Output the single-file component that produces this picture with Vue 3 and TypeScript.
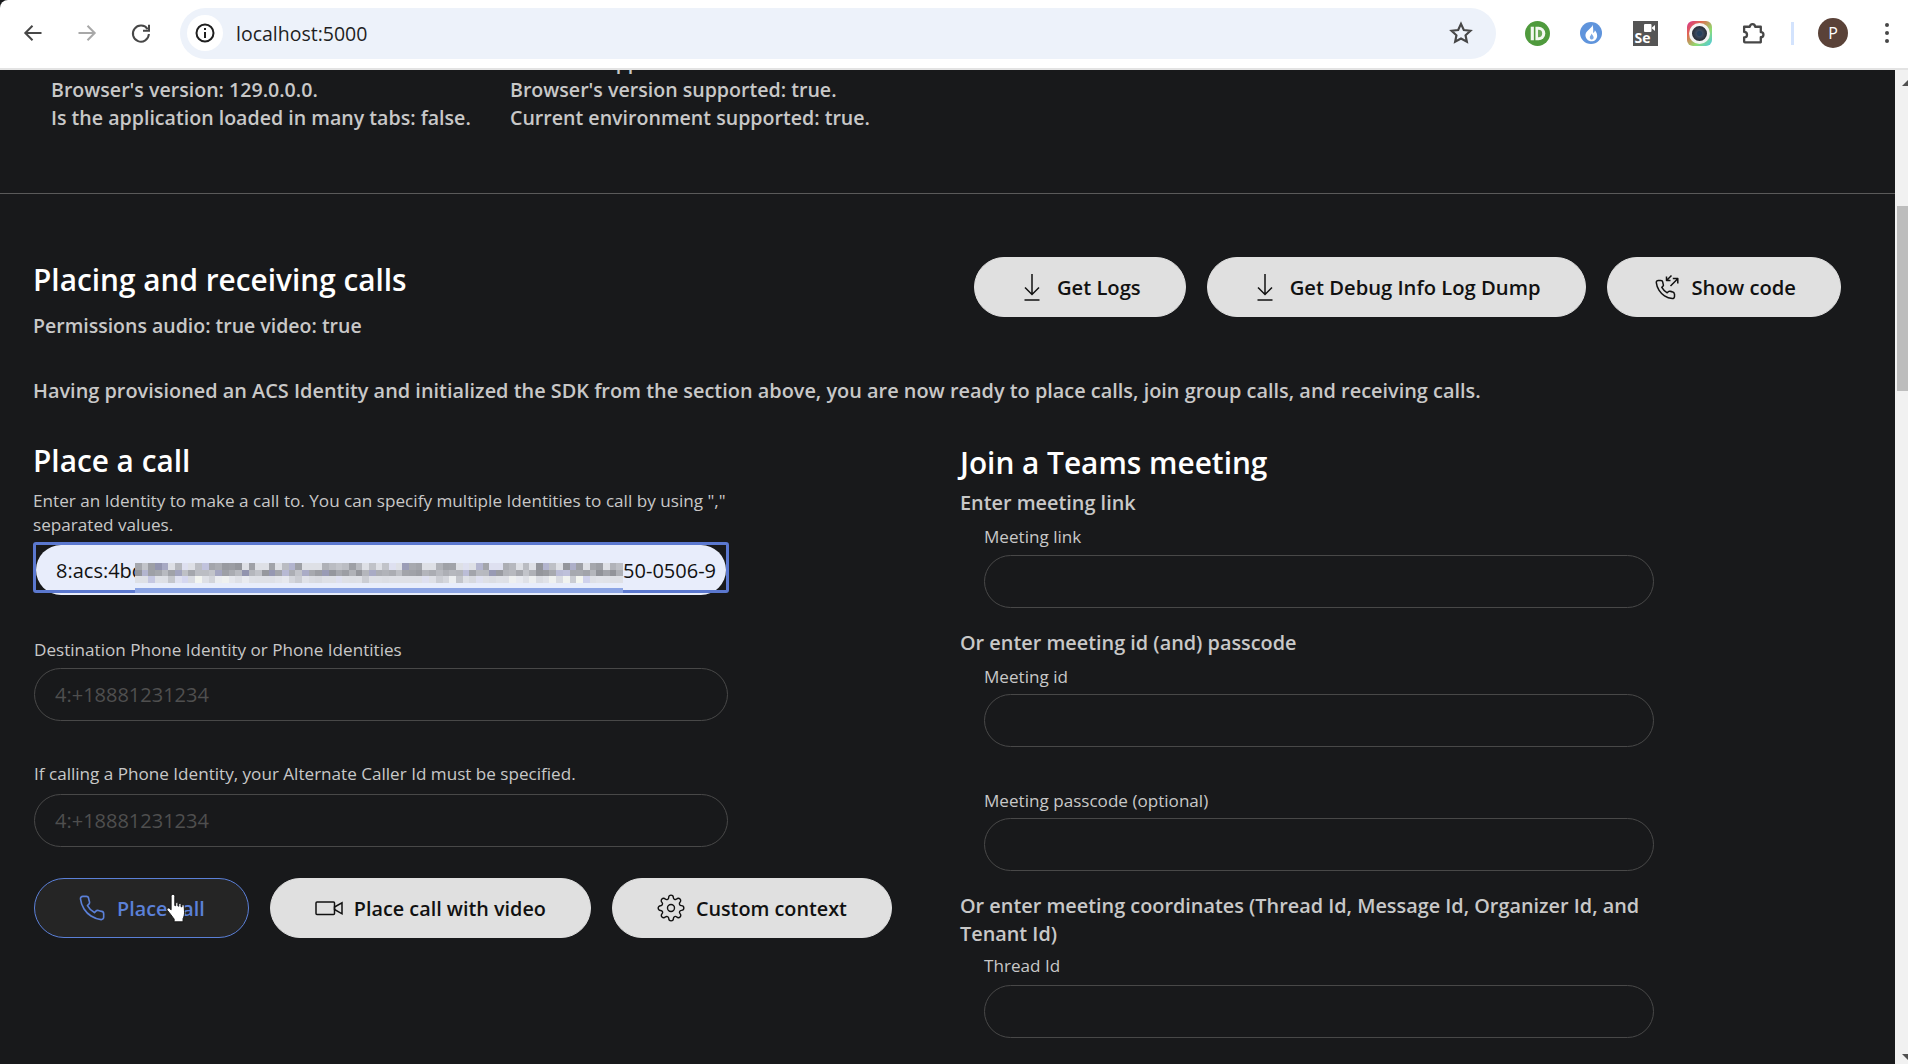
<script setup lang="ts">
// values for the pixelated strip that hides the middle of the identity
const blurCells: string[] = [];
let seed = 17;
for (let i = 0; i < 73 * 3; i++) {
  seed = (seed * 137 + 59) % 1009;
  const row = Math.floor(i / 73);
  const isGap = seed % 3 === 0 && row !== 1;
  const base = row === 2 ? 195 : 145;
  const light = isGap ? 222 : base + (seed % 50);
  const tint = seed % 7 === 0 ? 28 : 8;
  blurCells.push(`rgb(${light}, ${light + 2}, ${Math.min(light + tint, 240)})`);
}

const placeCallFields = [
  { label: 'Destination Phone Identity or Phone Identities', placeholder: '4:+18881231234' },
  { label: 'If calling a Phone Identity, your Alternate Caller Id must be specified.', placeholder: '4:+18881231234' },
];
</script>

<template>
  <div class="browser">
    <header class="toolbar">
      <div class="nav-icon">
        <svg width="24" height="24" viewBox="0 0 24 24" fill="none" stroke="#474747" stroke-width="2"><path d="M20.5 12H4.5M11.5 4.8 4.3 12l7.2 7.2" /></svg>
      </div>
      <div class="nav-icon">
        <svg width="24" height="24" viewBox="0 0 24 24" fill="none" stroke="#a8a8a8" stroke-width="2"><path d="M3.5 12h16M12.5 4.8l7.2 7.2-7.2 7.2" /></svg>
      </div>
      <div class="nav-icon">
        <svg width="24" height="24" viewBox="0 0 24 24" fill="none" stroke="#474747" stroke-width="2"><path d="M18.6 8.2A8 8 0 1 0 19.9 13" /><path d="M20 3.8v6h-6" /></svg>
      </div>
      <div class="address-bar">
        <span class="site-info">
          <svg width="22" height="22" viewBox="0 0 22 22" fill="none" stroke="#1f1f1f" stroke-width="2"><circle cx="11" cy="11" r="8.5" /><path d="M11 10v6M11 6v2" /></svg>
        </span>
        <span class="url">localhost:5000</span>
        <svg class="star" width="26" height="26" viewBox="0 0 24 24" fill="none" stroke="#474747" stroke-width="2"><path d="m12 3.6 2.6 5.6 6.1.7-4.5 4.2 1.2 6L12 17.1l-5.4 3 1.2-6-4.5-4.2 6.1-.7z" /></svg>
      </div>
      <div class="ext-icons">
        <div class="nav-icon">
          <svg width="25" height="25" viewBox="0 0 24 24"><circle cx="12" cy="12" r="12" fill="#4f9a3d" /><rect x="5.500" y="5.500" width="3" height="13" fill="#f4f8f2" /><path d="M10 5.500h3a6.500 6.500 0 0 1 0 13h-3z" fill="#f4f8f2" /><path d="M12.500 8.500h.5a3.500 3.500 0 0 1 0 7h-.5z" fill="#6aa858" /></svg>
        </div>
        <div class="nav-icon">
          <svg width="22" height="22" viewBox="0 0 24 24"><circle cx="12" cy="12" r="12" fill="#5f94dc" /><path d="M13.500 2.500c.8 3.800-6.600 6.200-7.500 11-.6 4 3 7.500 6.500 7.500 3.600 0 6.400-2.800 6.200-6.400-.1-2.400-1.400-4.200-2.500-5.600-.2 1.600-.8 2.400-1.800 3 .4-3.800-.2-7.400-1-9.500z" fill="#fff" /><path d="M12.400 12.500c.4 1.600-2 2.600-1.700 4.600.2 1.300 1.100 2 2.200 2s2-.9 2-2.200c0-1.800-1.500-2.800-2.500-4.400z" fill="#7eaae4" /></svg>
        </div>
        <div class="nav-icon">
          <div class="se-badge">
            <svg class="se-cam" width="11" height="8" viewBox="0 0 11 8"><rect width="7.500" height="8" rx="1" fill="#fff" /><path d="M8 3.500 11 1v6L8 4.500z" fill="#fff" /></svg>
            <span class="se-text">Se</span>
          </div>
        </div>
        <div class="nav-icon">
          <div class="cam-badge"><span class="cam-lens"></span></div>
        </div>
        <div class="nav-icon">
          <svg width="25" height="25" viewBox="0 0 24 24" fill="none" stroke="#474747" stroke-width="2.200" stroke-linejoin="round"><path d="M3 5.500h5.500c0-3.400 5-3.400 5 0H19v5.200c3.400 0 3.400 4.800 0 4.800V20.500H3.800c-.5 0-.8-.3-.8-.8v-4c3.700 0 3.700-5.200 0-5.200z" /></svg>
        </div>
      </div>
      <span class="toolbar-sep"></span>
      <span class="avatar">P</span>
      <div class="menu-dots"><i></i><i></i><i></i></div>
    </header>

    <div class="viewport">
      <main class="page">
        <section class="env-info">
          <div>
            <p>Browser's name: Chrome.</p>
            <p>Browser's version: 129.0.0.0.</p>
            <p>Is the application loaded in many tabs: false.</p>
          </div>
          <div>
            <p>Browser supported: true.</p>
            <p>Browser's version supported: true.</p>
            <p>Current environment supported: true.</p>
          </div>
        </section>

        <section class="calls">
          <div class="calls-head">
            <div>
              <h2 class="section-title">Placing and receiving calls</h2>
              <p class="strong-text permissions">Permissions audio: true video: true</p>
            </div>
            <div class="btn-row head-actions">
              <button class="pill-btn">
                <svg class="btn-icon" width="26" height="30" viewBox="0 0 26 30" fill="none" stroke="#111" stroke-width="1.500"><path d="M13 2v20M6 15.500l7 7 7-7M5.500 28h15" /></svg>
                Get Logs
              </button>
              <button class="pill-btn">
                <svg class="btn-icon" width="26" height="30" viewBox="0 0 26 30" fill="none" stroke="#111" stroke-width="1.500"><path d="M13 2v20M6 15.500l7 7 7-7M5.500 28h15" /></svg>
                Get Debug Info Log Dump
              </button>
              <button class="pill-btn">
                <svg class="btn-icon" width="28" height="28" viewBox="0 0 28 28" fill="none" stroke="#111" stroke-width="1.500" stroke-linejoin="round"><path d="M22.500 21v2.600a2 2 0 0 1-2.200 2 18 18 0 0 1-7.800-2.800 17.500 17.500 0 0 1-5.400-5.400A18 18 0 0 1 4.300 9.600a2 2 0 0 1 2-2.200h2.600a1.800 1.800 0 0 1 1.800 1.500c.1.900.3 1.700.6 2.500a1.800 1.800 0 0 1-.4 1.900l-1.100 1.100a14.400 14.400 0 0 0 5.400 5.400l1.100-1.100a1.800 1.800 0 0 1 1.900-.4c.8.3 1.600.5 2.500.6a1.800 1.800 0 0 1 1.500 1.800z" /><path d="M19.500 2.500l-5 5M14.500 3.500v4h4M18.500 13l7-7M20.800 5.500h5v5" /></svg>
                Show code
              </button>
            </div>
          </div>

          <p class="strong-text intro">Having provisioned an ACS Identity and initialized the SDK from the section above, you are now ready to place calls, join group calls, and receiving calls.</p>

          <div class="columns">
            <div class="col-place">
              <h2 class="section-title">Place a call</h2>
              <p class="hint">Enter an Identity to make a call to. You can specify multiple Identities to call by using "," separated values.</p>
              <div class="identity-input">
                <div class="identity-pill">
                  <span>8:acs:4bc</span>
                  <span>50-0506-9</span>
                </div>
                <span class="blur-strip">
                  <i v-for="(color, idx) in blurCells" :key="idx" :style="{ background: color }"></i>
                </span>
                <span class="focus-ring"></span>
                <span class="focus-strip"></span>
              </div>

              <div v-for="field in placeCallFields" :key="field.label" class="place-field">
                <label class="field-label">{{ field.label }}</label>
                <input class="pill-input" :placeholder="field.placeholder" />
              </div>

              <div class="btn-row call-actions">
                <button class="pill-btn is-hovered">
                  <svg class="btn-icon" width="28" height="28" viewBox="0 0 24 24" fill="none" stroke="#5b80d8" stroke-width="1.400" stroke-linejoin="round"><path d="M22 16.920v3a2 2 0 0 1-2.180 2 19.790 19.790 0 0 1-8.630-3.070 19.500 19.500 0 0 1-6-6 19.790 19.790 0 0 1-3.070-8.670A2 2 0 0 1 4.110 2h3a2 2 0 0 1 2 1.720 12.840 12.840 0 0 0 .7 2.810 2 2 0 0 1-.45 2.110L8.090 9.910a16 16 0 0 0 6 6l1.270-1.270a2 2 0 0 1 2.110-.45 12.840 12.840 0 0 0 2.810.7A2 2 0 0 1 22 16.920z" /></svg>
                  Place call
                  <svg class="hand-cursor" width="26" height="33" viewBox="0 0 28 36"><path d="M8.500 1.500c1.200 0 2 .9 2 2.200v10l1 .2v-2.400c0-1.400 2.200-1.400 2.400 0v2.700l1 .2v-2c0-1.400 2.200-1.400 2.400 0v2.500l1 .2v-1.400c0-1.300 2.200-1.300 2.400.2l.4 6.600c.1 3.400-.6 5.400-1.600 7.400v3.500H9.800v-3c-2-2.400-4.600-6.400-7.300-9.400-1.400-1.600.2-3.600 2-2.400l2 1.800V3.700c0-1.300.8-2.200 2-2.200z" fill="#fff" stroke="#111" stroke-width="1" /></svg>
                </button>
                <button class="pill-btn">
                  <svg class="btn-icon" width="28" height="28" viewBox="0 0 28 28" fill="none" stroke="#111" stroke-width="1.500"><rect x="1" y="8" width="18.500" height="12.500" rx="1" /><path d="M19.500 13 27 8.800v11L19.500 15.500z" /></svg>
                  Place call with video
                </button>
                <button class="pill-btn">
                  <svg class="btn-icon" width="28" height="28" viewBox="0 0 24 24" fill="none" stroke="#111" stroke-width="1.200"><circle cx="12" cy="12" r="3" /><path d="M19.400 15a1.650 1.650 0 0 0 .33 1.820l.06.06a2 2 0 0 1 0 2.830 2 2 0 0 1-2.830 0l-.06-.06a1.650 1.650 0 0 0-1.820-.33 1.650 1.650 0 0 0-1 1.510V21a2 2 0 0 1-2 2 2 2 0 0 1-2-2v-.09A1.650 1.650 0 0 0 9 19.400a1.650 1.650 0 0 0-1.820.33l-.06.06a2 2 0 0 1-2.830 0 2 2 0 0 1 0-2.830l.06-.06a1.650 1.650 0 0 0 .33-1.820 1.650 1.650 0 0 0-1.510-1H3a2 2 0 0 1-2-2 2 2 0 0 1 2-2h.09A1.650 1.650 0 0 0 4.600 9a1.650 1.650 0 0 0-.33-1.820l-.06-.06a2 2 0 0 1 0-2.830 2 2 0 0 1 2.830 0l.06.06a1.650 1.650 0 0 0 1.820.33H9a1.650 1.650 0 0 0 1-1.510V3a2 2 0 0 1 2-2 2 2 0 0 1 2 2v.09a1.650 1.650 0 0 0 1 1.510 1.650 1.650 0 0 0 1.820-.33l.06-.06a2 2 0 0 1 2.830 0 2 2 0 0 1 0 2.830l-.06.06a1.650 1.650 0 0 0-.33 1.820V9a1.650 1.650 0 0 0 1.510 1H21a2 2 0 0 1 2 2 2 2 0 0 1-2 2h-.09a1.650 1.650 0 0 0-1.510 1z" /></svg>
                  Custom context
                </button>
              </div>
            </div>

            <div class="col-join">
              <h2 class="section-title">Join a Teams meeting</h2>
              <p class="strong-text group-title first">Enter meeting link</p>
              <div class="join-field first">
                <label class="field-label">Meeting link</label>
                <input class="pill-input" />
              </div>
              <p class="strong-text group-title">Or enter meeting id (and) passcode</p>
              <div class="join-field">
                <label class="field-label">Meeting id</label>
                <input class="pill-input" />
              </div>
              <div class="join-field spaced">
                <label class="field-label">Meeting passcode (optional)</label>
                <input class="pill-input" />
              </div>
              <p class="strong-text group-title">Or enter meeting coordinates (Thread Id, Message Id, Organizer Id, and Tenant Id)</p>
              <div class="join-field last">
                <label class="field-label">Thread Id</label>
                <input class="pill-input" />
              </div>
            </div>
          </div>
        </section>
      </main>

      <aside class="scrollbar">
        <span class="arrow up"></span>
        <span class="thumb"></span>
        <span class="arrow down"></span>
      </aside>
    </div>
  </div>
</template>

<style>
html, body {
  margin: 0;
  height: 100%;
  overflow: hidden;
}
</style>

<style scoped>
.browser {
  width: 1908px;
  height: 1064px;
  display: flex;
  flex-direction: column;
  font-family: "Open Sans", "Noto Sans", sans-serif;
  background: #18191b;
  overflow: hidden;
}

.toolbar {
  flex: none;
  box-sizing: border-box;
  padding-left: 6px;
  display: flex;
  align-items: center;
  background: #fff;
  border-top-left-radius: 8px;
  border-bottom: 2px solid #e3e3e3;
  height: 70px;
  padding-bottom: 2px;
}

.nav-icon {
  width: 54px;
  height: 40px;
  flex: none;
  display: flex;
  align-items: center;
  justify-content: center;
}

.address-bar {
  width: 1316px;
  height: 51px;
  margin-left: 12px;
  flex: none;
  display: flex;
  align-items: center;
  box-sizing: border-box;
  padding: 0 22px 0 7px;
  background: #edf2fa;
  border-radius: 26px;
}

.site-info {
  width: 36px;
  height: 36px;
  border-radius: 50%;
  background: #fff;
  display: flex;
  align-items: center;
  justify-content: center;
}

.url {
  margin-left: 13px;
  font-size: 19.500px;
  color: #1f1f1f;
  flex: 1;
}

.ext-icons {
  display: flex;
  margin-left: 14px;
}

.se-badge {
  position: relative;
  width: 25px;
  height: 25px;
  background: #555;
  color: #fff;
  overflow: hidden;
}

.se-cam {
  position: absolute;
  right: 3px;
  top: 3px;
}

.se-text {
  position: absolute;
  left: 2px;
  bottom: 1px;
  font-size: 14px;
  line-height: 14px;
  font-weight: 700;
}

.cam-badge {
  width: 25px;
  height: 25px;
  border-radius: 6px;
  background: linear-gradient(135deg, #d8308c 0%, #e06a50 30%, #8fdc70 65%, #48c8e8 100%);
  display: flex;
  align-items: center;
  justify-content: center;
}

.cam-lens {
  width: 15px;
  height: 15px;
  border-radius: 50%;
  background: radial-gradient(circle, #26405e 0 20%, #3c4a60 30%, #2a2f3a 65%);
  border: 3px solid #f4f4f4;
}

.toolbar-sep {
  width: 3px;
  height: 23px;
  margin-left: 11px;
  background: #d3e3fd;
  flex: none;
}

.avatar {
  width: 30px;
  height: 30px;
  margin-left: 24px;
  border-radius: 50%;
  background: #5a4238;
  color: #fff;
  font-size: 16px;
  display: flex;
  align-items: center;
  justify-content: center;
  flex: none;
}

.menu-dots {
  margin-left: 37px;
  display: flex;
  flex-direction: column;
  gap: 4px;
}

.menu-dots i {
  width: 4px;
  height: 4px;
  border-radius: 50%;
  background: #474747;
}

.viewport {
  flex: 1;
  min-height: 0;
  display: flex;
}

.page {
  flex: 1;
  min-width: 0;
  overflow: hidden;
  background: #18191b;
  color: #c8c8c8;
}

.env-info {
  margin-top: -22px;
  padding: 0 0 61px 51px;
  display: grid;
  grid-template-columns: 459px auto;
  justify-content: start;
  border-bottom: 1px solid #5a5a5a;
  font-size: 19.600px;
  font-weight: 600;
  line-height: 28px;
}

.env-info p {
  margin: 0;
}

.calls {
  padding: 63px 54px 0 33px;
}

.calls-head {
  display: flex;
  justify-content: space-between;
  align-items: flex-start;
}

.section-title {
  margin: 0;
  font-size: 29.800px;
  line-height: 40px;
  font-weight: 600;
  color: #fff;
}

.calls-head .section-title {
  margin-top: 3px;
}

.strong-text {
  margin: 0;
  font-size: 19.500px;
  line-height: 28px;
  font-weight: 600;
}

.permissions {
  margin-top: 12px;
}

.intro {
  margin-top: 37px;
  font-size: 19.900px;
  white-space: nowrap;
}

.btn-row {
  display: flex;
  gap: 21px;
}

.pill-btn {
  position: relative;
  height: 60px;
  padding: 0 44px;
  display: flex;
  align-items: center;
  gap: 11px;
  box-sizing: border-box;
  border: 1px solid #e0e0e0;
  border-radius: 30px;
  background: #e0e0e0;
  color: #111;
  font-family: inherit;
  font-size: 19.800px;
  font-weight: 600;
  white-space: nowrap;
}

.head-actions .pill-btn {
  gap: 12px;
  font-size: 20.200px;
}

.btn-icon {
  flex: none;
}

.pill-btn.is-hovered {
  padding: 0 43px;
  background: #252525;
  border-color: #5b80d8;
  color: #5b80d8;
}

.hand-cursor {
  position: absolute;
  left: 130px;
  top: 14px;
}

.columns {
  margin-top: 36px;
  display: grid;
  grid-template-columns: 927px 700px;
}

.hint {
  margin: 8px 0 0;
  width: 700px;
  font-size: 17.150px;
  line-height: 24px;
}

.identity-input {
  position: relative;
  width: 696px;
  height: 51px;
  margin-top: 5px;
  font-size: 20px;
  color: #111;
  white-space: nowrap;
}

.identity-pill {
  position: absolute;
  left: 3px;
  right: 3px;
  top: 3px;
  height: 50px;
  box-sizing: border-box;
  padding: 0 10px 0 20px;
  display: flex;
  align-items: center;
  justify-content: space-between;
  background: #e8edfb;
  border-radius: 25px;
}

.blur-strip {
  position: absolute;
  left: 102px;
  top: 21px;
  width: 488px;
  height: 20px;
  display: grid;
  grid-template-columns: repeat(73, 1fr);
  grid-template-rows: repeat(3, 1fr);
}

.focus-ring {
  position: absolute;
  inset: 0;
  border: 3px solid #5b78cf;
  border-radius: 3px;
  box-sizing: border-box;
}

.focus-strip {
  position: absolute;
  left: 102px;
  width: 488px;
  top: 46px;
  height: 5px;
  background: #8ba4e4;
}

.place-field {
  margin-top: 45px;
  width: 694px;
  margin-left: 1px;
}

.place-field + .place-field {
  margin-top: 41px;
}

.place-field + .place-field .field-label {
  margin-bottom: 8px;
}

.field-label {
  display: block;
  margin-bottom: 6px;
  font-size: 17.100px;
  line-height: 24px;
}

.pill-input {
  display: block;
  width: 100%;
  height: 53px;
  box-sizing: border-box;
  padding: 0 20px;
  border: 1px solid #484848;
  border-radius: 27px;
  background: transparent;
  color: #ddd;
  font-family: inherit;
  font-size: 20px;
  outline: none;
}

.pill-input::placeholder {
  color: #4f4f4f;
}

.call-actions {
  margin-top: 31px;
  margin-left: 1px;
}

.col-join .section-title {
  margin-top: 2px;
}

.group-title {
  margin-top: 21px;
  width: 690px;
  font-size: 19.850px;
}

.group-title.first {
  margin-top: 6px;
}

.join-field {
  margin: 8px 0 0 24px;
  width: 670px;
}

.join-field .field-label {
  margin-bottom: 5px;
}

.join-field.first .field-label {
  margin-bottom: 6px;
}

.join-field.spaced {
  margin-top: 42px;
}

.join-field.last {
  margin-top: 6px;
}

.join-field.last .field-label {
  margin-bottom: 7px;
}

.scrollbar {
  width: 13px;
  flex: none;
  display: flex;
  flex-direction: column;
  background: #f1f1f1;
  overflow: hidden;
}

.arrow {
  display: block;
  flex: none;
  width: 0;
  height: 0;
  margin-left: 7px;
  border: 6px solid transparent;
  border-top: 0;
  border-bottom: 6px solid #505050;
}

.arrow.up {
  margin-top: 10px;
}

.arrow.down {
  margin-top: auto;
  margin-bottom: 4px;
  border-bottom: 0;
  border-top: 6px solid #505050;
}

.thumb {
  flex: none;
  margin: 120px 0 0 2px;
  height: 185px;
  background: #bdbdbd;
}
</style>
